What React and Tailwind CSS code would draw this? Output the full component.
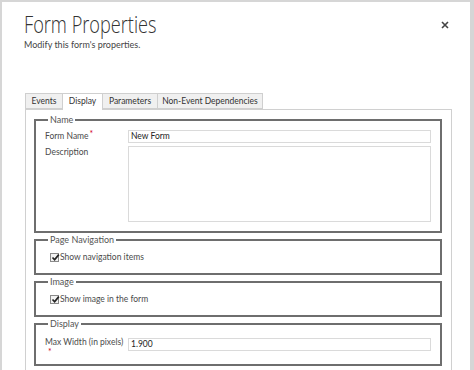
import React from 'react';

const font = { fontFamily: 'Lato, "Open Sans", sans-serif' };

const Check = () => (
  <span className="relative w-[9px] h-[9px] border border-[#8a8a8a] bg-[#f2f2f2] flex items-center justify-center">
    <svg width="9" height="9" viewBox="0 0 9 9" className="absolute left-0 -top-[1px]">
      <path d="M1.5 4.5 L3.6 6.8 L7.8 1.6" fill="none" stroke="#222" strokeWidth="1.7" />
    </svg>
  </span>
);

const Box = ({ title, className = '', children }) => (
  <fieldset className={`border-2 border-[#6e6e6e] px-[9px] ${className}`}>
    <legend className="ml-[3px] px-[2px] text-[9px] leading-[12px] text-[#555]">{title}</legend>
    {children}
  </fieldset>
);

export default function App() {
  return (
    <div className="w-[474px] h-[370px] overflow-hidden bg-[#d6d6d6] pt-[2px] pl-[2px] pr-[4px]" style={font}>
      <div className="relative h-full bg-white pl-[22px] pr-[17px]">
        <button className="absolute right-[20px] top-[18px] w-[10px] h-[10px] flex items-center justify-center">
          <svg width="8" height="8" viewBox="0 0 8 8">
            <path d="M1 1 L7 7 M7 1 L1 7" stroke="#444" strokeWidth="1.6" />
          </svg>
        </button>

        <h1
          className="pt-[9px] text-[23px] leading-[27px] font-light text-[#333] origin-left scale-x-[0.79]"
          style={{ fontFamily: '"Open Sans", sans-serif' }}
        >
          Form Properties
        </h1>
        <p className="mt-[1px] text-[9px] leading-[12px] text-[#444]">Modify this form's properties.</p>

        <div className="mt-[41px] ml-[1px]">
          <div className="flex items-end text-[8.5px] leading-[14px] text-[#333]">
            <span className="w-[38px] text-center border border-[#cfcfcf] bg-[#f0f0f0] h-[16px]">Events</span>
            <span className="w-[40px] text-center border border-b-0 border-l-0 border-[#cfcfcf] bg-white h-[17px] relative top-[1px]">Display</span>
            <span className="w-[55px] text-center border border-l-0 border-[#cfcfcf] bg-[#f0f0f0] h-[16px]">Parameters</span>
            <span className="w-[105px] text-center border border-l-0 border-[#cfcfcf] bg-[#f0f0f0] h-[16px]">Non-Event Dependencies</span>
          </div>

          <div className="w-[427px] h-[300px] border border-[#d0d0d0] pt-[4px] pl-[8px] pr-[9px] text-[8.5px] text-[#4a4a4a]">
            <Box title="Name" className="pb-[9px]">
              <div className="flex items-start mt-[4px]">
                <span className="w-[83px] leading-[13px]">
                  Form Name<span className="text-[#d0021b] relative -top-[2px] ml-[1px]">*</span>
                </span>
                <div className="w-[303px] h-[13px] border border-[#dadada] pl-[2px] leading-[11px] text-[#222]">New Form</div>
              </div>
              <div className="flex items-start mt-[3px]">
                <span className="w-[83px] leading-[13px]">Description</span>
                <div className="w-[303px] h-[76px] border border-[#dadada]" />
              </div>
            </Box>

            <Box title="Page Navigation" className="pb-[10px] mt-[1px]">
              <div className="flex items-center pl-[5px] mt-[5px] leading-[12px]">
                <Check />
                <span className="ml-[1px]">Show navigation items</span>
              </div>
            </Box>

            <Box title="Image" className="pb-[10px] mt-[1px]">
              <div className="flex items-center pl-[5px] mt-[5px] leading-[12px]">
                <Check />
                <span className="ml-[1px]">Show image in the form</span>
              </div>
            </Box>

            <Box title="Display" className="pb-[8px] mt-[1px]">
              <div className="flex items-start mt-[6px]">
                <span className="w-[83px] leading-[12px]">
                  Max Width (in pixels)
                  <span className="block text-[#d0021b] pl-[3px] leading-[8px]">*</span>
                </span>
                <div className="w-[303px] h-[13px] mt-[2px] border border-[#dadada] pl-[2px] leading-[11px] text-[#222]">1.900</div>
              </div>
            </Box>
          </div>
        </div>
      </div>
    </div>
  );
}
